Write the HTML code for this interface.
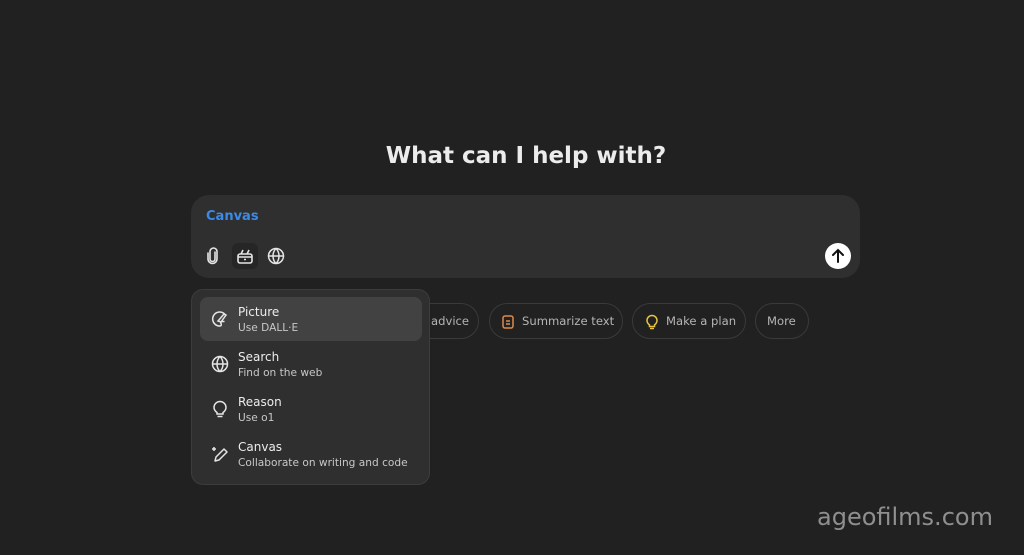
<!DOCTYPE html>
<html><head><meta charset="utf-8"><style>
*{margin:0;padding:0;box-sizing:border-box}
body{width:1024px;height:555px;background:#212121;font-family:"DejaVu Sans","Liberation Sans",sans-serif;color:#ececec;position:relative;overflow:hidden}
.h{position:absolute;top:143px;left:14px;width:1024px;text-align:center;font-size:23px;font-weight:bold;color:#ececec}
.box{position:absolute;left:191px;top:195px;width:669px;height:83px;background:#2f2f2f;border-radius:18px}
.cv{position:absolute;left:15px;top:14px;color:#3b8ae6;font-weight:bold;font-size:13px}
.ic{position:absolute;top:52px}
.send{position:absolute;right:9px;top:48px;width:26px;height:26px;border-radius:50%;background:#fff}
.chip{position:absolute;top:303px;height:36px;border:1px solid #3a3a3a;border-radius:18px;font-size:11.6px;color:#b4b4b4;line-height:34px}
.menu{position:absolute;left:191px;top:289px;width:239px;height:196px;background:#2f2f2f;border:1px solid #3c3c3c;border-radius:12px}
.it{position:absolute;left:8px;width:222px;height:44px;border-radius:8px}
.it.sel{background:#424242}
.it .t{position:absolute;left:38px;top:8px;font-size:12px;color:#ececec}
.it .s{position:absolute;left:38px;top:25px;font-size:10.6px;color:#c8c8c8}
.it svg{position:absolute;left:11px;top:13px}
.wm{position:absolute;left:817px;top:503px;font-family:"Comic Sans MS","DejaVu Sans",cursive;font-size:24px;color:#8f8f8f}
</style></head><body>
<div class="h">What can I help with?</div>
<div class="box">
<div class="cv">Canvas</div>
<svg class="ic" style="left:14px" width="16" height="18" viewBox="0 0 16 18" fill="none" stroke="#e5e5e5" stroke-width="1.6" stroke-linecap="round"><path d="M10 5v7a2.5 2.5 0 0 1-5 0V4.5a3.5 3.5 0 0 1 7 0V12a4.5 4.5 0 0 1-9 0V6"/></svg>
<div style="position:absolute;left:41px;top:48px;width:26px;height:26px;background:#262626;border-radius:6px"></div>
<svg class="ic" style="left:45px" width="18" height="18" viewBox="0 0 18 18" fill="none" stroke="#e5e5e5" stroke-width="1.6" stroke-linejoin="round"><rect x="2" y="7" width="14" height="9" rx="2"/><path d="M2 10h14M8 12.5h2M5 7l2-4M11 7l2-4"/></svg>
<svg class="ic" style="left:76px" width="18" height="18" viewBox="0 0 18 18" fill="none" stroke="#e5e5e5" stroke-width="1.5"><circle cx="9" cy="9" r="7.5"/><path d="M1.5 9h15M9 1.5c-4 4-4 11 0 15M9 1.5c4 4 4 11 0 15"/></svg>
<div class="send"><svg width="26" height="26" viewBox="0 0 26 26" fill="none" stroke="#111" stroke-width="2" stroke-linecap="round"><path d="M13 19V7M8 12l5-5 5 5"/></svg></div>
</div>
<div class="chip" style="left:410px;width:69px;padding-left:20px">advice</div>
<div class="chip" style="left:489px;width:134px;padding-left:32px"><svg style="position:absolute;left:12px;top:11px" width="12" height="14" viewBox="0 0 12 14" fill="none" stroke="#e0894a" stroke-width="1.5"><rect x="1" y="1" width="10" height="12" rx="2"/><path d="M4 6h4M4 9h4"/></svg>Summarize text</div>
<div class="chip" style="left:632px;width:114px;padding-left:33px"><svg style="position:absolute;left:12px;top:10px" width="14" height="16" viewBox="0 0 14 16" fill="none" stroke="#e6c443" stroke-width="1.5"><path d="M4.5 11C3 9.8 2 8.3 2 6.5a5 5 0 0 1 10 0c0 1.8-1 3.3-2.5 4.5v1.5h-5zM5 14.5h4"/></svg>Make a plan</div>
<div class="chip" style="left:755px;width:54px;padding-left:11px">More</div>
<div class="menu">
<div class="it sel" style="top:7px"><svg width="18" height="18" viewBox="0 0 18 18" fill="none" stroke="#e5e5e5" stroke-width="1.5"><path d="M15 6A7 7 0 1 0 9 16c1.5 0 1.5-1.5 1-2.5s0-2 1.5-2h2"/><path d="M7 11l6-7 2 1-5 7z"/></svg><div class="t">Picture</div><div class="s">Use DALL·E</div></div>
<div class="it" style="top:52px"><svg width="18" height="18" viewBox="0 0 18 18" fill="none" stroke="#e5e5e5" stroke-width="1.5"><circle cx="9" cy="9" r="7.5"/><path d="M1.5 9h15M9 1.5c-4 4-4 11 0 15M9 1.5c4 4 4 11 0 15"/></svg><div class="t">Search</div><div class="s">Find on the web</div></div>
<div class="it" style="top:97px"><svg width="18" height="18" viewBox="0 0 18 18" fill="none" stroke="#e5e5e5" stroke-width="1.5"><path d="M6 12.5C4.2 11.2 3 9.5 3 7.5a6 6 0 0 1 12 0c0 2-1.2 3.7-3 5v1.5H6zM6.5 16.5h5"/></svg><div class="t">Reason</div><div class="s">Use o1</div></div>
<div class="it" style="top:142px"><svg width="18" height="18" viewBox="0 0 18 18" fill="none" stroke="#e5e5e5" stroke-width="1.5" stroke-linejoin="round"><path d="M4 16l1-4 8-8 3 3-8 8zM3 2v4M1 4h4"/></svg><div class="t">Canvas</div><div class="s">Collaborate on writing and code</div></div>
</div>
<div class="wm">ageofilms.com</div>
</body></html>
